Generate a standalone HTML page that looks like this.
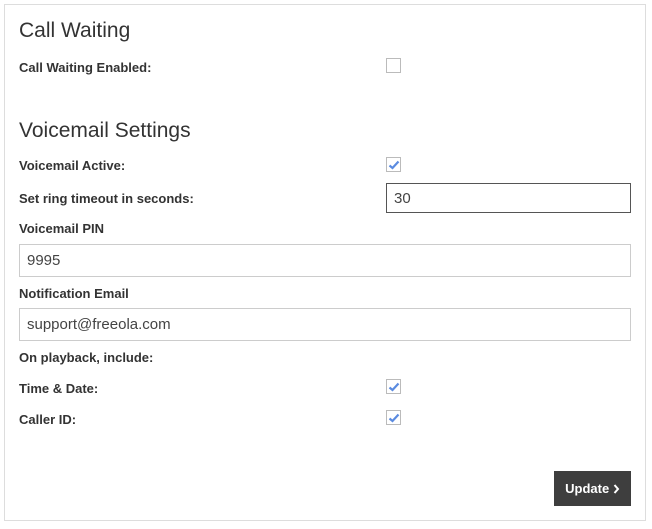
<!DOCTYPE html>
<html><head><style>
body{margin:0;width:652px;height:529px;background:#fff;font-family:"Liberation Sans",sans-serif;color:#333;position:relative;overflow:hidden}
.panel{position:absolute;left:4px;top:4px;width:640px;height:515px;border:1px solid #ddd}
h2{position:absolute;margin:0;font-weight:normal;font-size:21px;color:#333;left:19px}
.l{position:absolute;left:19px;font-size:13px;font-weight:bold;color:#333}
.cb{position:absolute;left:386px;width:13px;height:13px;border:1px solid #bbb;background:#fff}
.cb svg{position:absolute;left:1px;top:1px}
.in{position:absolute;border:1px solid #ccc;box-sizing:border-box;font-size:15px;padding-left:7px;color:#444;display:flex;align-items:center}
.btn{position:absolute;left:554px;top:471px;width:77px;height:35px;background:#3e3e3e;color:#fff;font-size:13px;font-weight:bold;display:flex;align-items:center;justify-content:center}
</style></head><body>
<div class="panel"></div>
<h2 style="top:19px">Call Waiting</h2>
<div class="l" style="top:60px">Call Waiting Enabled:</div>
<div class="cb" style="top:58px"></div>
<h2 style="top:119px">Voicemail Settings</h2>
<div class="l" style="top:158px">Voicemail Active:</div>
<div class="cb" style="top:157px"><svg width="12" height="12" viewBox="0 0 12 12"><path d="M1.5 6.5 L4.5 9 L10.5 2.5" stroke="#5b8be0" stroke-width="2.2" fill="none"/></svg></div>
<div class="l" style="top:191px">Set ring timeout in seconds:</div>
<div class="in" style="left:386px;top:183px;width:245px;height:30px;border-color:#555">30</div>
<div class="l" style="top:221px">Voicemail PIN</div>
<div class="in" style="left:19px;top:244px;width:612px;height:33px">9995</div>
<div class="l" style="top:286px">Notification Email</div>
<div class="in" style="left:19px;top:308px;width:612px;height:33px">support@freeola.com</div>
<div class="l" style="top:350px">On playback, include:</div>
<div class="l" style="top:381px">Time &amp; Date:</div>
<div class="cb" style="top:379px"><svg width="12" height="12" viewBox="0 0 12 12"><path d="M1.5 6.5 L4.5 9 L10.5 2.5" stroke="#5b8be0" stroke-width="2.2" fill="none"/></svg></div>
<div class="l" style="top:412px">Caller ID:</div>
<div class="cb" style="top:410px"><svg width="12" height="12" viewBox="0 0 12 12"><path d="M1.5 6.5 L4.5 9 L10.5 2.5" stroke="#5b8be0" stroke-width="2.2" fill="none"/></svg></div>
<div class="btn">Update&nbsp;<svg width="7" height="10" viewBox="0 0 7 10"><path d="M1.5 1 L5 5 L1.5 9" stroke="#fff" stroke-width="2" fill="none"/></svg></div>
</body></html>
